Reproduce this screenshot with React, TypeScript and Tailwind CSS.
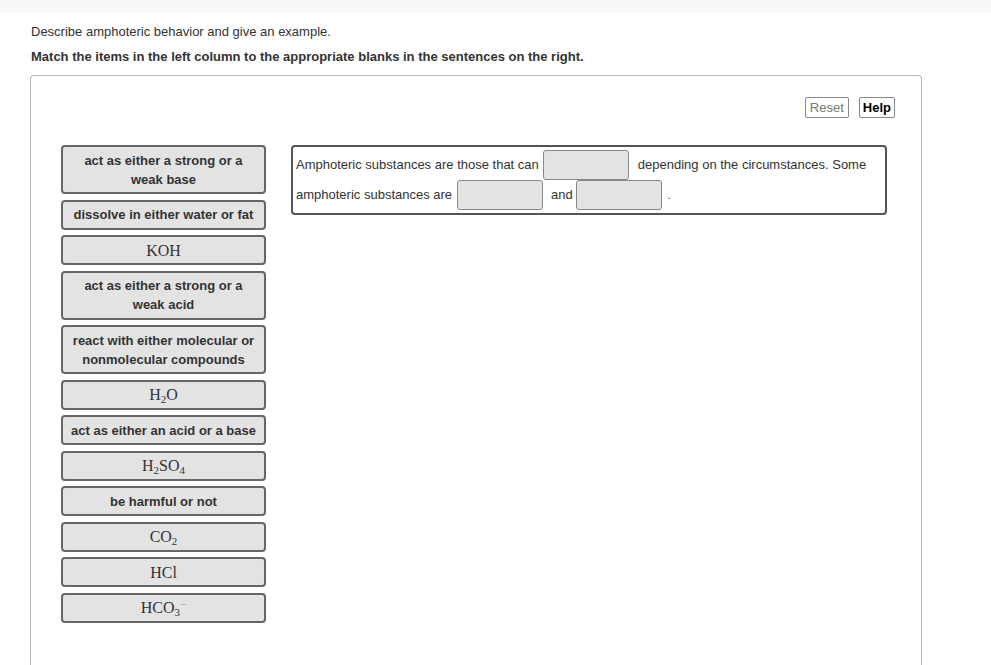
import type { ReactNode } from "react";

const serif = "font-['Liberation_Serif','Times_New_Roman',serif] text-[16px] font-normal text-[#333]";

const items: { key: string; label: ReactNode; formula?: boolean }[] = [
  { key: "base", label: "act as either a strong or a weak base" },
  { key: "dissolve", label: "dissolve in either water or fat" },
  { key: "koh", label: "KOH", formula: true },
  { key: "acid", label: "act as either a strong or a weak acid" },
  { key: "react", label: "react with either molecular or nonmolecular compounds" },
  {
    key: "h2o",
    label: (
      <>
        H<sub className="text-[11px]">2</sub>O
      </>
    ),
    formula: true,
  },
  { key: "either", label: "act as either an acid or a base" },
  {
    key: "h2so4",
    label: (
      <>
        H<sub className="text-[11px]">2</sub>SO<sub className="text-[11px]">4</sub>
      </>
    ),
    formula: true,
  },
  { key: "harm", label: "be harmful or not" },
  {
    key: "co2",
    label: (
      <>
        CO<sub className="text-[11px]">2</sub>
      </>
    ),
    formula: true,
  },
  { key: "hcl", label: "HCl", formula: true },
  {
    key: "hco3",
    label: (
      <>
        HCO<sub className="text-[11px]">3</sub>
        <sup className="text-[11px] text-[#999]">−</sup>
      </>
    ),
    formula: true,
  },
];

const Blank = ({ className = "" }: { className?: string }) => (
  <span className={`inline-block h-[30px] w-[86px] shrink-0 rounded-[3px] border border-[#888] bg-[#e3e3e3] ${className}`} />
);

export default function App() {
  return (
    <div className="min-h-[665px] bg-white font-['Liberation_Sans',Arial,sans-serif] text-[13px] text-[#333]">
      <div className="h-[13px] bg-[#f8f8f8]" />
      <div className="pl-[31px] pt-[11px]">
        <p className="leading-[16px]">Describe amphoteric behavior and give an example.</p>
        <p className="mt-[9px] font-bold leading-[16px]">
          Match the items in the left column to the appropriate blanks in the sentences on the right.
        </p>
      </div>

      <div className="ml-[30px] mt-[10px] h-[600px] w-[892px] rounded-t-[4px] border border-b-0 border-[#bbb]">
        <div className="flex justify-end gap-[10px] pr-[26px] pt-[21px]">
          <button className="h-[21px] rounded-[2px] border border-[#888] px-[4px] text-[13px] leading-[19px] text-[#777]">
            Reset
          </button>
          <button className="h-[21px] rounded-[2px] border border-[#888] px-[3px] text-[13px] font-bold leading-[19px] text-black">
            Help
          </button>
        </div>

        <div className="mt-[27px] flex items-start gap-[25px] pl-[30px]">
          <div className="flex w-[205px] flex-col gap-[5.5px]">
            {items.map((it) => (
              <div
                key={it.key}
                className={`flex min-h-[30px] items-center justify-center rounded-[4px] border-2 border-[#666] bg-[#e3e3e3] px-[8px] py-[3.5px] text-center leading-[19px] ${
                  it.formula ? serif : "font-bold text-[#333]"
                }`}
              >
                <span>{it.label}</span>
              </div>
            ))}
          </div>

          <div className="w-[596px] rounded-[4px] border-2 border-[#555] px-[3px] pb-[3px] pt-[3px]">
            <div className="flex h-[30px] items-center">
              <span>Amphoteric substances are those that can</span>
              <Blank className="ml-[4px]" />
              <span className="ml-[9px]">depending on the circumstances. Some</span>
            </div>
            <div className="flex h-[30px] items-center">
              <span>amphoteric substances are</span>
              <Blank className="ml-[5px]" />
              <span className="ml-[8px]">and</span>
              <Blank className="ml-[3px]" />
              <span className="ml-[6px] text-[10px]">.</span>
            </div>
          </div>
        </div>
      </div>
    </div>
  );
}
